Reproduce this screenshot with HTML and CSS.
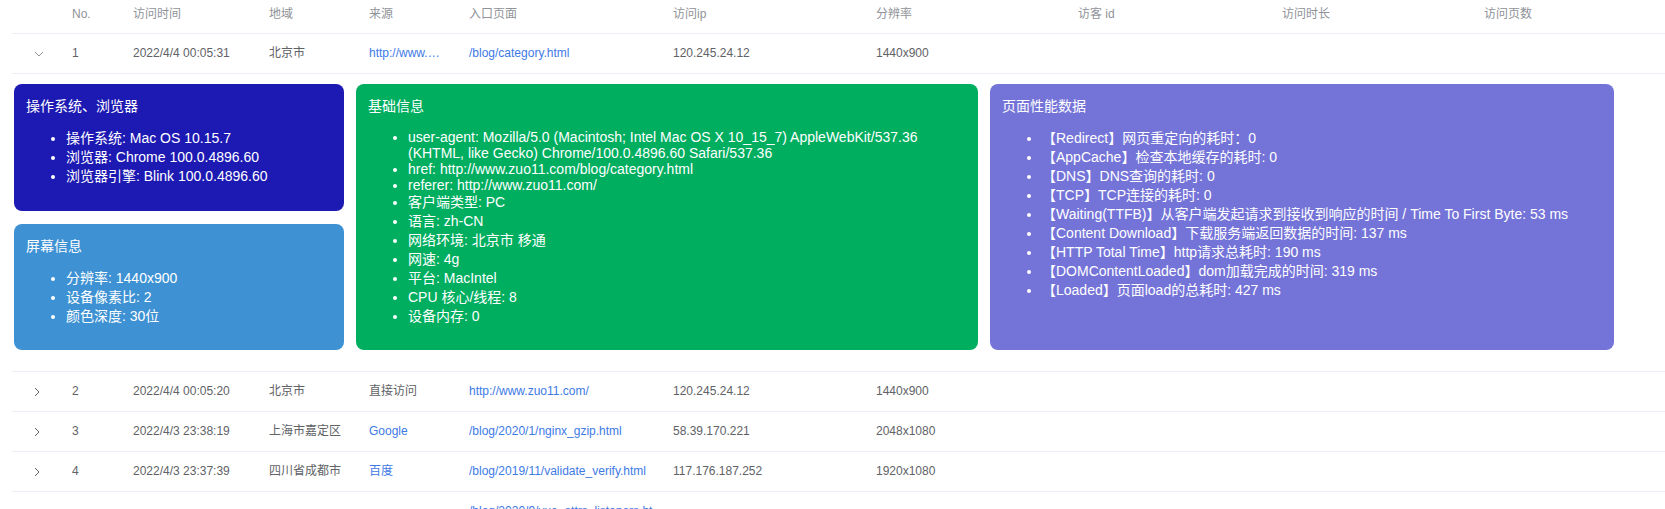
FILE: index.html
```html
<!DOCTYPE html>
<html lang="zh-CN">
<head>
<meta charset="utf-8">
<title>访问记录</title>
<link rel="stylesheet" href="styles.css">
</head>
<body>
<div class="page">
<table class="visits">
  <colgroup>
    <col class="c-exp"><col class="c-no"><col class="c-time"><col class="c-region"><col class="c-src"><col class="c-entry"><col class="c-ip"><col class="c-res"><col class="c-vid"><col class="c-dur"><col class="c-pages">
  </colgroup>
  <thead>
    <tr>
      <th></th><th>No.</th><th>访问时间</th><th>地域</th><th>来源</th><th>入口页面</th><th>访问ip</th><th>分辨率</th><th>访客 id</th><th>访问时长</th><th>访问页数</th>
    </tr>
  </thead>
  <tbody>
    <tr>
      <td class="exp"><svg class="chev-down" width="10" height="10" viewBox="0 0 10 10"><polyline points="1,3 5,7 9,3" fill="none" stroke="#909399" stroke-width="1"/></svg></td>
      <td>1</td><td>2022/4/4 00:05:31</td><td>北京市</td>
      <td><span class="link ellipsis">http://www.zuo11.com/</span></td>
      <td><span class="link">/blog/category.html</span></td>
      <td>120.245.24.12</td><td>1440x900</td><td></td><td></td><td></td>
    </tr>
    <tr class="expanded">
      <td colspan="11" class="detail-cell">
        <div class="detail">
          <div class="col-left">
            <div class="card card-os">
              <div class="card-title">操作系统、浏览器</div>
              <ul class="cjk">
                <li>操作系统: Mac OS 10.15.7</li>
                <li>浏览器: Chrome 100.0.4896.60</li>
                <li>浏览器引擎: Blink 100.0.4896.60</li>
              </ul>
            </div>
            <div class="card card-screen">
              <div class="card-title">屏幕信息</div>
              <ul class="cjk">
                <li>分辨率: 1440x900</li>
                <li>设备像素比: 2</li>
                <li>颜色深度: 30位</li>
              </ul>
            </div>
          </div>
          <div class="card card-base">
            <div class="card-title">基础信息</div>
            <ul>
              <li>user-agent: Mozilla/5.0 (Macintosh; Intel Mac OS X 10_15_7) AppleWebKit/537.36 (KHTML, like Gecko) Chrome/100.0.4896.60 Safari/537.36</li>
              <li>href: http://www.zuo11.com/blog/category.html</li>
              <li>referer: http://www.zuo11.com/</li>
              <li class="zh">客户端类型: PC</li>
              <li class="zh">语言: zh-CN</li>
              <li class="zh">网络环境: 北京市 移通</li>
              <li class="zh">网速: 4g</li>
              <li class="zh">平台: MacIntel</li>
              <li class="zh">CPU 核心/线程: 8</li>
              <li class="zh">设备内存: 0</li>
            </ul>
          </div>
          <div class="card card-perf">
            <div class="card-title">页面性能数据</div>
            <ul class="cjk">
              <li>【Redirect】网页重定向的耗时：0</li>
              <li>【AppCache】检查本地缓存的耗时: 0</li>
              <li>【DNS】DNS查询的耗时: 0</li>
              <li>【TCP】TCP连接的耗时: 0</li>
              <li>【Waiting(TTFB)】从客户端发起请求到接收到响应的时间 / Time To First Byte: 53 ms</li>
              <li>【Content Download】下载服务端返回数据的时间: 137 ms</li>
              <li>【HTTP Total Time】http请求总耗时: 190 ms</li>
              <li>【DOMContentLoaded】dom加载完成的时间: 319 ms</li>
              <li>【Loaded】页面load的总耗时: 427 ms</li>
            </ul>
          </div>
        </div>
      </td>
    </tr>
    <tr>
      <td class="exp"><svg class="chev-right" width="10" height="10" viewBox="0 0 10 10"><polyline points="1,1 5,5 1,9" fill="none" stroke="#606266" stroke-width="1"/></svg></td>
      <td>2</td><td>2022/4/4 00:05:20</td><td>北京市</td><td>直接访问</td>
      <td><span class="link">http://www.zuo11.com/</span></td>
      <td>120.245.24.12</td><td>1440x900</td><td></td><td></td><td></td>
    </tr>
    <tr>
      <td class="exp"><svg class="chev-right" width="10" height="10" viewBox="0 0 10 10"><polyline points="1,1 5,5 1,9" fill="none" stroke="#606266" stroke-width="1"/></svg></td>
      <td>3</td><td>2022/4/3 23:38:19</td><td>上海市嘉定区</td><td><span class="link">Google</span></td>
      <td><span class="link">/blog/2020/1/nginx_gzip.html</span></td>
      <td>58.39.170.221</td><td>2048x1080</td><td></td><td></td><td></td>
    </tr>
    <tr>
      <td class="exp"><svg class="chev-right" width="10" height="10" viewBox="0 0 10 10"><polyline points="1,1 5,5 1,9" fill="none" stroke="#606266" stroke-width="1"/></svg></td>
      <td>4</td><td>2022/4/3 23:37:39</td><td>四川省成都市</td><td><span class="link">百度</span></td>
      <td><span class="link">/blog/2019/11/validate_verify.html</span></td>
      <td>117.176.187.252</td><td>1920x1080</td><td></td><td></td><td></td>
    </tr>
    <tr>
      <td class="exp"><svg class="chev-right" width="10" height="10" viewBox="0 0 10 10"><polyline points="1,1 5,5 1,9" fill="none" stroke="#606266" stroke-width="1"/></svg></td>
      <td>5</td><td></td><td></td><td></td>
      <td><span class="link">/blog/2020/9/vue_attrs_listeners.html</span></td>
      <td></td><td></td><td></td><td></td><td></td>
    </tr>
  </tbody>
</table>
</div>
</body>
</html>
```
FILE: styles.css
```css
html, body {
  margin: 0;
  padding: 0;
  background: #ffffff;
  overflow: hidden;
}
body {
  font-family: "Liberation Sans", Arial, "Noto Sans CJK SC", sans-serif;
  font-size: 12px;
  color: #606266;
}
.page {
  padding-left: 12px;
}
.visits {
  width: 1653px;
  table-layout: fixed;
  border-collapse: collapse;
}
.c-exp { width: 50px; }
.c-no { width: 61px; }
.c-time { width: 136px; }
.c-region { width: 100px; }
.c-src { width: 100px; }
.c-entry { width: 204px; }
.c-ip { width: 203px; }
.c-res { width: 202px; }
.c-vid { width: 204px; }
.c-dur { width: 202px; }
.c-pages { width: 191px; }

.visits th {
  text-align: left;
  font-weight: normal;
  color: #909399;
  line-height: 23px;
  padding: 3px 10px 7px;
  border-bottom: 1px solid #ebeef5;
  white-space: nowrap;
}
.visits td {
  line-height: 23px;
  padding: 8px 10px;
  border-bottom: 1px solid #ebeef5;
  vertical-align: middle;
  word-break: break-all;
}
.visits td.exp {
  padding: 8px 0 8px 22px;
}
.exp svg {
  display: block;
}
.link {
  color: #3d7ae6;
}
.ellipsis {
  display: block;
  width: 76px;
  overflow: hidden;
  white-space: nowrap;
  text-overflow: ellipsis;
}

.visits td.detail-cell {
  padding: 10px 0 21px 2px;
  word-break: normal;
}
.detail {
  display: flex;
  gap: 12px;
  align-items: stretch;
}
.col-left {
  width: 330px;
  display: flex;
  flex-direction: column;
  gap: 13px;
}
.col-left .card {
  flex: 1;
}
.card {
  border-radius: 8px;
  color: #ffffff;
  padding: 12px;
  font-size: 14px;
  box-sizing: border-box;
  word-break: normal;
}
.card-title {
  line-height: 20px;
}
.card ul {
  margin: 13px 0 12px;
  padding-left: 40px;
  line-height: 16px;
}
.card ul.cjk, .card li.zh {
  line-height: 19px;
}
.card-os { background: #1d19b3; }
.card-screen { background: #3e92d3; }
.card-base { background: #00ae60; width: 622px; }
.card-perf { background: #7473d8; width: 624px; }
```
